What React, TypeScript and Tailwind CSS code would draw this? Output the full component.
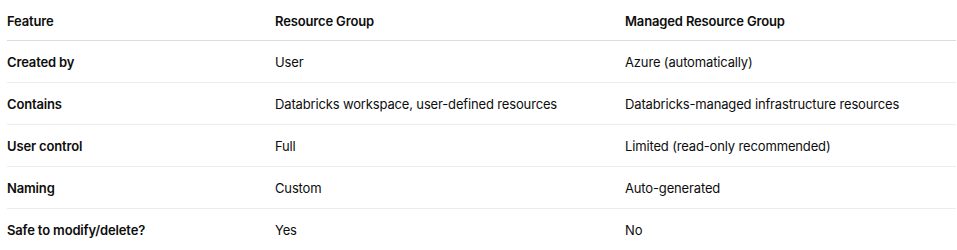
import React from 'react';

const rows = [
  ['Created by', 'User', 'Azure (automatically)'],
  ['Contains', 'Databricks workspace, user-defined resources', 'Databricks-managed infrastructure resources'],
  ['User control', 'Full', 'Limited (read-only recommended)'],
  ['Naming', 'Custom', 'Auto-generated'],
  ['Safe to modify/delete?', 'Yes', 'No'],
];

const cols = 'grid grid-cols-[268px_350px_1fr] items-start pt-[11px] leading-[20px]';

export default function App() {
  return (
    <div className="min-h-screen bg-white pl-[7px] pr-px text-[13px] tracking-[-0.15px] text-[#0d0d0d] font-['Inter','Liberation_Sans',sans-serif]">
      {/* Header */}
      <div className={`${cols} h-[41px] border-b border-[#dcdcdc] font-semibold`}>
        <div>Feature</div>
        <div>Resource Group</div>
        <div>Managed Resource Group</div>
      </div>

      {/* Body */}
      {rows.map((row, i) => (
        <div
          key={i}
          className={`${cols} h-[42px] ${i < rows.length - 1 ? 'border-b border-[#ececec]' : ''}`}
        >
          <div className="font-semibold">{row[0]}</div>
          <div>{row[1]}</div>
          <div>{row[2]}</div>
        </div>
      ))}
    </div>
  );
}
